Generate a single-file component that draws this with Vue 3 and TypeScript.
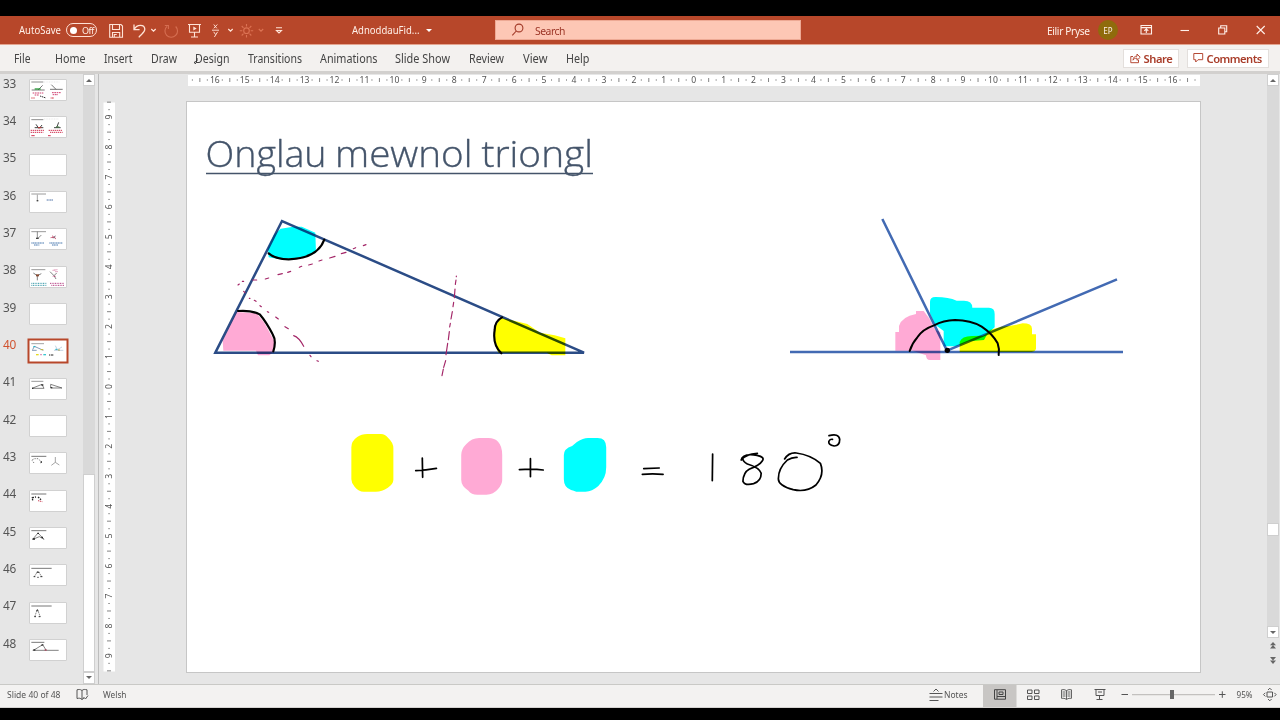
<script setup lang="ts">
interface Tab { label: string; width: number; text: number }
interface Thumb { n: number; art: string[] }

const tabs: Tab[] = [
  { label: 'File', width: 40.5, text: 16.5 },
  { label: 'Home', width: 49.5, text: 30.5 },
  { label: 'Insert', width: 47, text: 28.5 },
  { label: 'Draw', width: 44, text: 26 },
  { label: 'Design', width: 53, text: 34.5 },
  { label: 'Transitions', width: 72, text: 54 },
  { label: 'Animations', width: 75, text: 57.5 },
  { label: 'Slide Show', width: 74, text: 55 },
  { label: 'Review', width: 54, text: 35 },
  { label: 'View', width: 42.5, text: 24.5 },
  { label: 'Help', width: 40, text: 23.5 },
]

// Each entry is "colour|stroke width|dash|path" on a 108 x 60 grid.
const thumbs: Thumb[] = [
  { n: 33, art: ['#555|2||M4 6H40', '#bbb|1|3 2|M42 6H88', '#333|2||M5 30H44M60 28H98M24 30L38 16M78 28L64 14', '#2a9a3a|4||M14 27H32', '#d04070|3|5 2|M8 39H40M66 38H92M14 45H26M68 44H84', '#333|3|4 2|M30 48L48 54', '#d03040|3|3 1|M4 54H14M62 54H72'] },
  { n: 34, art: ['#555|2||M4 8H40', '#bbb|1|3 2|M42 6H86', '#444|3||M14 32H40M26 34L18 22M28 34L36 24M72 32H92M80 32L86 16', '#c33|3||M24 32H34', '#3a7a3a|3||M78 30H88', '#d03050|3|4 2|M2 40H44M56 40H98M2 46H40M60 46H98', '#d03050|3||M4 56H14M54 56H62'] },
  { n: 35, art: [] },
  { n: 36, art: ['#666|2||M4 6H48', '#777|2||M22 8V28', '#444|4||M20 26H25', '#5577aa|3|4 1|M50 24H70'] },
  { n: 37, art: ['#666|2||M4 8H48', '#555|2||M22 8V30L34 18', '#444|4||M18 28H26', '#c04060|3|3 1|M62 26L76 24M66 20L78 30', '#3a4a60|2||M70 28L76 20', '#4a7ab0|3|4 1|M4 42H42M58 42H98M12 48H28M66 48H84'] },
  { n: 38, art: ['#666|2||M4 8H46', '#444|2||M10 18L22 26L34 20M22 26V40M60 14L72 26L80 18M72 26L78 36', '#864a32|6||M18 25H27', '#c03070|2|3 1|M68 10L82 8M68 28H78M76 14H84', '#3598a8|3|3 2|M4 49H50M4 55H50', '#b54085|3|3 2|M60 49H102M64 55H102'] },
  { n: 39, art: [] },
  { n: 40, art: ['#777|2||M4 8H42', '#456894|2||M8 26L13 16L40 28M6 28H20', '#18b5c7|3||M10 17H16M76 25H82', '#c5b833|3||M32 26H40M84 27H90', '#4775a5|1||M72 28H100M76 14L82 26L96 18', '#e5da22|4||M18 41H26', '#e19abf|4||M30 41H36', '#39c5d0|4||M40 41H48', '#222|3||M57 42H60M62 42H70'] },
  { n: 41, art: ['#666|2||M4 7H40', '#444|2||M6 28L36 16L42 28ZM62 16V27H96Z', '#333|4||M34 18H40M6 28H10M62 26H67'] },
  { n: 42, art: [] },
  { n: 43, art: ['#777|3||M4 10H49', '#444|2|4 3|M7 20L14 17H24L36 28L30 30M12 30L6 22', '#333|4||M32 27H36', '#777|2||M76 12V28L64 37M76 28L88 36'] },
  { n: 44, art: ['#777|3||M4 9H49', '#222|4|5 3|M8 28L7 20L18 18M24 18L33 26', '#cc4055|3|4 2|M24 29L37 32'] },
  { n: 45, art: ['#777|3||M4 8H49', '#444|2||M8 34L24 15L42 34L28 26Z', '#222|4||M22 16H27M8 33H15M34 28H39'] },
  { n: 46, art: ['#777|3||M4 10H65', '#555|2|6 2|M12 36L24 18L36 36', '#333|3||M20 22H28M11 35H16M31 35H37M22 37H26'] },
  { n: 47, art: ['#777|3||M4 9H65', '#555|2|6 2|M14 42L22 18L31 42', '#333|3||M19 23H25M13 41H18M26 41H31'] },
  { n: 48, art: ['#777|3||M4 7H43', '#444|2||M8 31H86M12 30L38 14L48 30', '#333|4||M34 16L40 14M10 30H16', '#b02040|3||M44 30H50'] },
]
const stroke = (s: string) => {
  const [color, w, dash, d] = s.split('|')
  return { stroke: color, 'stroke-width': w, 'stroke-dasharray': dash || undefined, d }
}

const range = (from: number, to: number) => Array.from({ length: to - from + 1 }, (_, i) => from + i)
const hNums = range(-16, 16)
const vNums = range(-9, 9)
const hQuarters = range(-67, 67).filter((q) => q % 4 !== 0)
const vQuarters = range(-38, 38).filter((q) => q % 4 !== 0)
const step = 29.93
</script>

<template>
  <div class="screen">
    <header class="titlebar">
      <span class="autosave"><svg width="46" height="20"><text x="0" y="14" textLength="42" lengthAdjust="spacingAndGlyphs">AutoSave</text></svg></span>
      <span class="toggle"><i></i><b>Off</b></span>
      <svg class="quick" viewBox="100 17 190 28" width="190" height="28" fill="none" stroke="#ffe3d6" stroke-width="1.1">
        <path d="M109.7 25.5H121l1.5 1.5V38.3H109.7ZM112.5 25.5v5h7v-5M112.5 38v-4.5h7.2V38M114.3 38v-2.5h2.4" />
        <path d="M134 25.5v5.2h5.6M134.3 30.3c2.5-5.3 10.2-5.3 10.5-.2c.2 3.5-3.5 5-6 8.2" stroke-width="1.3" />
        <path d="M151.3 30l2.2 2.2 2.2-2.2M228.3 30l2.2 2.2 2.2-2.2" stroke-width="1.3" />
        <path d="M167 27.3a6.3 6.3 0 1 0 8.7.2M164.800 26.500h3.600v3.600" stroke="#d66f52" />
        <path d="M188 25.500h13M189.500 25.500v7.800h10v-7.800M194.500 33.500v4.500M191 38h7" />
        <path d="M193.300 27.600l3.400 1.900-3.400 1.900z" fill="#ffe3d6" stroke="none" />
        <path d="M212 31.200h7M213.800 25.500l3 3.800M217.300 25.500l-3.500 3.800M213.700 32.800l1.900 2.800M217.600 32.800l-3.200 5.200" stroke-width=".95" />
        <g stroke="#dc7354"><circle cx="246.500" cy="31.700" r="2.800" /><path d="M246.500 25v2.500M246.500 36v2.500M239.800 31.700h2.500M250.700 31.700h2.500M241.700 27l1.800 1.800M249.500 34.700l1.800 1.800M251.300 27l-1.800 1.800M243.500 34.700l-1.800 1.800M258.800 30l2.200 2.200 2.200-2.200" /></g>
        <path d="M276 28.800h6M276.500 31.500l2.500 2.500 2.500-2.500z" />
      </svg>
      <span class="doc"><svg width="74" height="20"><text x="0" y="14" textLength="67.500" lengthAdjust="spacingAndGlyphs">AdnoddauFid...</text></svg><i class="caret"></i></span>
      <div class="search">
        <svg width="14" height="14" viewBox="0 0 14 14" fill="none" stroke="#a23a28" stroke-width="1.100"><circle cx="8" cy="5" r="3.900" /><path d="M5.300 8L1.300 12.300" /></svg>
        <span>Search</span>
      </div>
      <span class="user">Eilir Pryse</span>
      <span class="avatar">EP</span>
      <svg class="window" viewBox="1130 17 150 28" width="150" height="28" fill="none" stroke="#fff0ea" stroke-width="1.100">
        <path d="M1141 26.500h10.500v8.500H1141zM1141 28.600h10.500M1146.300 34v-4M1144.300 31.800l2-2 2 2" />
        <path d="M1180.500 31.500h8.500" />
        <path d="M1218.700 29h6.100v6h-6.100zM1220.700 29v-2.200h6v6h-2" />
        <path d="M1256.700 27l8 8M1264.700 27l-8 8" />
      </svg>
    </header>

    <nav class="tabs">
      <span v-for="t in tabs" :key="t.label" class="tab" :style="{ width: t.width + 'px' }">
        <svg width="64" height="20"><text x="0" y="14.500" :textLength="t.text" lengthAdjust="spacingAndGlyphs">{{ t.label }}</text></svg>
      </span>
      <svg class="pointer" width="5" height="6" viewBox="0 0 5 6"><path d="M3 0v3L0 4.500 2 6" fill="none" stroke="#333" /></svg>
      <div class="actions">
        <button class="share">
          <svg width="11" height="12" viewBox="0 0 11 12" fill="none" stroke="#b64a36"><path d="M3 4.500H.8V10.700H8.500V8M3 8.200c.3-3 1.700-4 4-4V2l3.200 3.300L7 8.300V6.200C5.200 6.100 4 6.500 3 8.200z" /></svg>
          Share
        </button>
        <button class="comments">
          <svg width="11" height="12" viewBox="0 0 11 12" fill="none" stroke="#b64a36"><path d="M.8 1.500H9.700V7.700H5L2.700 10V7.700H.8z" /></svg>
          Comments
        </button>
      </div>
    </nav>

    <main class="work">
      <aside class="panel">
        <div v-for="t in thumbs" :key="t.n" class="row" :class="{ current: t.n === 40 }">
          <span class="num">{{ t.n }}</span>
          <span class="thumb">
            <svg viewBox="0 0 108 60" width="36" height="20" fill="none"><path v-for="(a, i) in t.art" :key="i" v-bind="stroke(a)" /></svg>
          </span>
        </div>
      </aside>
      <div class="scroll left">
        <span class="btn"><i class="up"></i></span>
        <span class="handle"></span>
        <span class="btn"><i class="down"></i></span>
      </div>
      <svg class="vruler" viewBox="99 74 88 611" width="88" height="611">
        <rect x="103.500" y="102.500" width="11.500" height="569" fill="#fff" />
        <path v-for="q in vQuarters" :key="q" :d="q % 2 === 0 ? `M107 ${386.5 + (q * step) / 4}h4` : `M108.3 ${386.5 + (q * step) / 4}h1.5`" stroke="#777" stroke-width=".9" />
        <text v-for="n in vNums" :key="n" :transform="`translate(112.3 ${386.5 + n * step}) rotate(-90)`" text-anchor="middle">{{ Math.abs(n) }}</text>
      </svg>
      <section class="editor">
        <svg class="hruler" viewBox="187 74 1014 28" width="1014" height="28">
          <rect x="188" y="75" width="1012" height="11" fill="#fff" />
          <path v-for="q in hQuarters" :key="q" :d="q % 2 === 0 ? `M${693.7 + (q * step) / 4} 78v4` : `M${693.7 + (q * step) / 4} 79.3v1.4`" stroke="#777" stroke-width=".9" />
          <text v-for="n in hNums" :key="n" :x="693.7 + n * step" y="83.300" text-anchor="middle">{{ Math.abs(n) }}</text>
        </svg>
        <svg class="slide" viewBox="187 102 1013 570" width="1013" height="570" fill="none" stroke-linecap="round" stroke-linejoin="round">
          <g class="heading">
            <text x="205.500" y="167" textLength="121" lengthAdjust="spacingAndGlyphs">Onglau</text>
            <text x="335" y="167" textLength="137.500" lengthAdjust="spacingAndGlyphs">mewnol</text>
            <text x="481.500" y="167" textLength="111.500" lengthAdjust="spacingAndGlyphs">triongl</text>
          </g>
          <path d="M206 173.500H593" stroke="#44546a" stroke-width="1.700" stroke-linecap="butt" />

          <!-- Triangle with three marked angles -->
          <g transform="translate(180 120) scale(.33333)">
            <path d="M106 698L306 303L1212 698Z" stroke="#2b4c86" stroke-width="7.500" stroke-linejoin="miter" />
            <g class="marker">
              <path d="M302 326L340 320L365 320L406 338L408 398L375 412L300 418L266 412L264 384L282 344Z" fill="#00ffff" />
              <path d="M170 576L230 580L253 608L283 664L280 696L268 706H234L228 692H130L128 662Z" fill="#ffaad5" />
              <path d="M962 594L1002 602L1042 612L1080 638L1124 646L1156 655V706H1115L1100 698H955L944 672L945 622Z" fill="#ffff00" />
            </g>
            <path d="M266 400Q285 417 326 418Q413 415 433 359M174 573Q215 570 239 583Q258 605 278 643Q290 662 280 694M966 592Q944 604 944 630Q937 674 964 700" stroke="#000" stroke-width="6.500" />
            <g stroke="#a32567" stroke-width="3.500">
              <path d="M174 495l4-3M187 484h4M218 480h12M256 477l10-3M294 464l13-3M323 457l9-3M358 442l7-3M386 435l11-3M417 423l9-3M449 414l16-5M484 401l14-4M520 386l7-3M550 377l8-3" />
              <path d="M191 514l4 4M208 535h2M223 541l5 3M240 557l4 3M262 575l4 2M287 591l8 6M315 620l10 6M341 647Q357 652 371 679M390 706l3 4M411 722l4 2" />
              <path d="M829 468v2M828 480l-2 13M825 507l-2 26M821 547l-2 13M817 575l-4 22M811 610l-2 11M808 635l-3 24M803 670l-5 34M797 722l-6 20M790 747l-4 20" />
            </g>
          </g>

          <!-- The same angles arranged on a straight line -->
          <g transform="translate(780 200) scale(.33333)">
            <path d="M30 456H1029M307 57L501 452L1011 238" stroke="#426ab3" stroke-width="7.500" stroke-linecap="butt" />
            <g class="marker">
              <path d="M346 396H357V378Q365 350 408 342V333H431L447 354L466 390L481 396V480H450Q438 480 438 466L420 460L398 452H346Z" fill="#ffaad5" />
              <path d="M450 306Q450 290 468 291Q506 291 530 302H552Q577 302 577 323H627Q644 323 644 342V382L622 402L612 420L566 424L530 439H491V393L466 374L450 340Z" fill="#00ffff" />
              <path d="M539 426Q545 408 576 408L609 407Q624 400 629 390L664 380Q705 376 728 370Q756 370 756 386V403H768V446Q766 454 755 456H539Z" fill="#ffff00" />
            </g>
            <path d="M389 453Q396 430 412 412Q427 388 462 376Q490 361 525 360Q572 360 605 380Q638 402 653 430Q659 446 656 465" stroke="#000" stroke-width="6" />
            <circle cx="502" cy="451" r="8" fill="#000" />
          </g>

          <!-- Angle sum written underneath -->
          <g transform="translate(330 420) scale(.3444 .33333)">
            <path d="M62 82Q62 63 79 51Q91 42 108 42H148Q160 42 169 54Q184 68 184 85V179Q184 192 168 203Q151 215 133 215H98Q83 215 72 201Q62 190 62 178Z" fill="#ff0" />
            <path d="M381 105Q381 87 396 72Q411 54 433 54H460Q478 54 488 65Q500 78 500 105V180Q500 193 488 207Q475 224 454 224H428Q410 224 402 212Q381 198 381 179Z" fill="#ffaad5" />
            <path d="M679 105Q679 86 703 78L717 66Q735 54 749 54H777Q802 54 802 82V142Q802 175 779 198Q761 215 742 215H715Q708 212 700 210Q679 203 679 178Z" fill="#0ff" />
            <path d="M249 152Q278 150 309 145M268 114L269 172M550 149Q587 145 619 150M582 116V170M911 146L956 144M907 163Q936 160 967 163M1111 102L1110 182M1241 100Q1207 102 1194 120Q1198 99 1240 106Q1264 111 1255 123Q1248 135 1217 148Q1200 158 1199 184Q1205 198 1230 191Q1252 184 1252 160Q1247 143 1212 132Q1196 123 1199 112M1320 117Q1332 97 1354 99Q1396 105 1424 130Q1437 164 1411 195Q1383 218 1345 209Q1300 196 1302 175Q1302 145 1328 120Q1342 111 1356 112M1449 47Q1477 39 1480 58Q1480 78 1464 78Q1445 74 1449 63Q1452 57 1459 58" stroke="#000" stroke-width="5" />
          </g>
        </svg>
      </section>
      <div class="right-rail">
        <div class="scroll right">
          <span class="btn"><i class="up"></i></span>
          <span class="handle"></span>
          <span class="btn"><i class="down"></i></span>
        </div>
        <svg width="12" height="32" viewBox="1267 638 12 32" fill="#666">
          <path d="M1273 642l3 3.200h-6zM1273 645l3 3.500h-6zM1273 664l3-3.500h-6zM1273 660.500l3-3.500h-6z" />
        </svg>
      </div>
    </main>

    <footer class="status">
      <span class="count"><svg width="60" height="16"><text x="0" y="12" textLength="53.500" lengthAdjust="spacingAndGlyphs">Slide 40 of 48</text></svg></span>
      <svg class="book" width="13" height="13" viewBox="0 0 13 13" fill="none" stroke="#555"><path d="M6 2.500C4 1 2.500 1.500 1 1.800V10.500C3 10 4.500 10 6 11.500V2.500C7.500 1 9 1.500 11 1.800V7M6 11.500L8 10M7.500 9l2 2 2.500-3.500" /></svg>
      <span class="lang"><svg width="30" height="16"><text x="0" y="12" textLength="23.500" lengthAdjust="spacingAndGlyphs">Welsh</text></svg></span>
      <svg class="views" viewBox="925 685 355 22" width="355" height="22" fill="none" stroke="#555">
        <rect x="983" y="685" width="33.500" height="22" fill="#c8c6c4" stroke="none" />
        <path d="M929.500 693.500h13M929.500 697h13M929.500 700.500h9M933.500 691.500l2.500-2.500 2.500 2.500" />
        <text x="944" y="698" textLength="23.500" lengthAdjust="spacingAndGlyphs">Notes</text>
        <path d="M994.500 689.700h11v9.500h-11zM997 690v9M997 696.500h8.500M999 692h4v2.500h-4z" stroke="#444" />
        <path d="M1027.500 690h4.500v3.500h-4.500zM1034.500 690h4.500v3.500h-4.500zM1027.500 696h4.500v3.500h-4.500zM1034.500 696h4.500v3.500h-4.500z" />
        <path d="M1066.500 690.500v9M1066.500 690.500q-2.500-1.500-5-.7v8.500q2.500-.5 5 1q2.500-1.500 5-1v-8.500q-2.500-.8-5 .7M1062.500 692h3M1062.500 694h3M1062.500 696h3M1067.500 692h3M1067.500 694h3M1067.500 696h3" stroke-width=".9" />
        <path d="M1094.500 689.500h11M1096 689.500v6h8v-6M1099.500 696v3.500M1096.500 699.500h6M1098 692h4" />
        <path d="M1121.500 694.500h6.500M1219 694.500h6.500M1222.300 691.300v6.500" />
        <path d="M1132 694.700h83" stroke="#c3c1bf" stroke-width="1.300" />
        <rect x="1170" y="690" width="4" height="9" fill="#666" stroke="none" />
        <text x="1236.500" y="698" textLength="16" lengthAdjust="spacingAndGlyphs">95%</text>
        <path d="M1267 692h5.500v5h-5.500zM1268 690l1.800-1.800 1.800 1.800M1268 699l1.800 1.800 1.800-1.800M1265.300 692.800l-1.800 1.800 1.800 1.800M1274.300 692.800l1.800 1.800-1.800 1.800" />
      </svg>
    </footer>
  </div>
</template>

<style>
body { margin: 0; background: #000; overflow: hidden; }
</style>

<style scoped>
.screen { box-sizing: border-box; width: 1280px; height: 720px; padding: 16px 0 12px; display: flex; flex-direction: column; background: #000; font-family: "Noto Sans", "Open Sans", sans-serif; }
svg { display: block; flex: none; }
.titlebar { height: 29px; flex: none; display: flex; align-items: center; background: #b7472a; color: #fff0e8; font-size: 10.5px; white-space: nowrap; border-bottom: 1px solid #e3a590; box-sizing: border-box; }
.titlebar text { fill: #fff0e8; font-size: 10.8px; }
.autosave { width: 47.5px; padding-left: 18.5px; }
.toggle { width: 29px; height: 11.5px; border: 1px solid #ffe0d5; border-radius: 8px; display: flex; align-items: center; }
.toggle i { width: 7px; height: 7px; border-radius: 50%; background: #fff; margin: 0 5px 0 3px; }
.toggle b { font-weight: 400; font-size: 9px; letter-spacing: -.5px; }
.quick { margin-left: 3px; }
.doc { display: flex; align-items: center; margin-left: 62px; width: 143px; }
.caret { border: 3px solid transparent; border-top: 3px solid #fff; border-bottom: 0; margin-left: 0; }
.search { width: 305.5px; height: 20px; box-sizing: border-box; display: flex; align-items: center; padding-left: 14.5px; gap: 10.5px; background: #fdc7b5; color: #9c3526; font-size: 10.4px; letter-spacing: -.5px; border: 1px solid #eda994; }
.search span { margin-top: 1px; }
.user { width: 43px; margin-left: 246.5px; font-size: 10.2px; letter-spacing: -.35px; margin-top: 1px; }
.avatar { width: 20px; height: 20px; margin-left: 8px; border-radius: 50%; background: #8f6b0c; font-size: 8px; display: grid; place-items: center; }
.window { margin-left: auto; }
.tabs { position: relative; height: 26px; flex: none; display: flex; align-items: center; padding-left: 14px; background: #f3f1ef; }
.tab { flex: none; }
.tab svg { overflow: visible; }
.tab text { font-size: 11.8px; fill: #444; }
.pointer { position: absolute; left: 194px; top: 13px; }
.actions { margin-left: auto; display: flex; gap: 8px; padding-right: 11px; }
.actions button { height: 19px; box-sizing: border-box; padding: 0 0 0 6px; display: flex; align-items: center; gap: 2.5px; border: 1px solid #e3dfdc; background: #fff; color: #a93d2a; font: 600 11.2px "Noto Sans", sans-serif; white-space: nowrap; }
.actions .share { width: 56px; letter-spacing: -.45px; }
.actions .comments { width: 82px; padding-left: 5px; letter-spacing: -.5px; }
.work { height: 614px; flex: none; box-sizing: border-box; border-top: 3px solid #d2d0ce; border-bottom: 1px solid #c9c9c6; display: flex; background: #e6e6e6; overflow: hidden; }
.panel { width: 83px; flex: none; padding-top: 5.1px; box-sizing: border-box; }
.row { height: 37.33px; display: flex; align-items: flex-start; }
.num { width: 26.5px; padding-left: 3px; font-size: 11.8px; line-height: 16px; letter-spacing: -.2px; color: #555; margin-top: -4.5px; }
.thumb { background: #fff; box-shadow: 0 0 0 .5px #bbb; height: 20px; margin-top: 1px; }
.current .num { color: #d0532f; }
.current .thumb { box-shadow: 0 0 0 .5px #fff, 0 0 0 2.5px #b7472a; }
.scroll { width: 12px; box-sizing: border-box; background: #d9d9d9; display: flex; flex-direction: column; flex: none; }
.btn, .handle { box-sizing: border-box; background: #fff; border: 1px solid #cfcfcf; flex: none; }
.btn { height: 12px; display: grid; place-items: center; }
.btn i { border: 3px solid transparent; }
.btn .up { border-bottom: 3px solid #666; border-top: 0; }
.btn .down { border-top: 3px solid #666; border-bottom: 0; }
.left { height: 609.5px; margin-right: 3px; }
.left .handle { height: 198px; margin-top: auto; }
.vruler { border-left: 1px solid #bdbdbd; }
.vruler text, .hruler text { font-size: 8.6px; fill: #555; }
.editor { width: 1014px; flex: none; }
.slide { background: #fff; outline: 1px solid #c6c6c6; }
.heading { font-family: "Open Sans", "Noto Sans", sans-serif; font-weight: 300; font-size: 37px; fill: #44546a; stroke: #44546a; stroke-width: .35px; }
.marker path { mix-blend-mode: multiply; }
.right-rail { margin-left: auto; padding-right: 1px; }
.right { height: 564px; }
.right .handle { height: 13px; margin-top: 436.5px; margin-bottom: auto; }
.status { height: 23px; flex: none; display: flex; align-items: flex-start; background: #f3f2f1; border-bottom: 1px solid #d5d3d1; box-sizing: border-box; }
.status text { font-size: 9px; fill: #555; stroke: none; }
.count { padding: 1px 0 0 6.5px; width: 69.5px; }
.book { margin-top: 3px; }
.lang { margin: 1px 0 0 13.5px; }
.views { margin-left: auto; }
</style>
